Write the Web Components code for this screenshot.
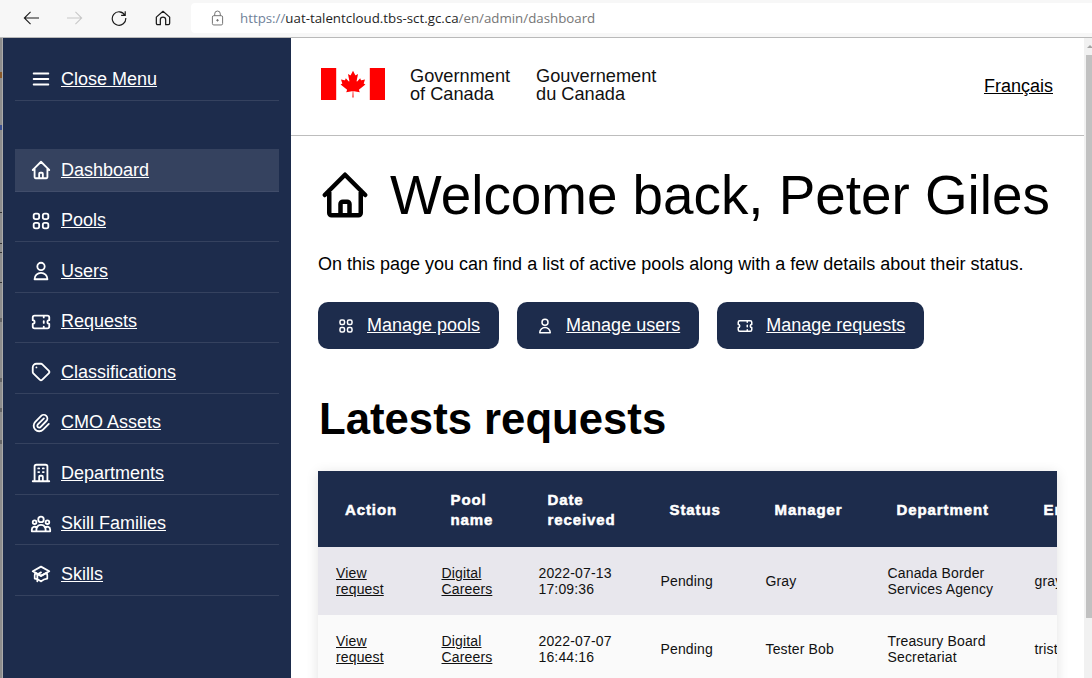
<!DOCTYPE html>
<html lang="en">
<head>
<meta charset="utf-8">
<title>Dashboard</title>
<style>
  html, body { margin: 0; height: 678px; overflow: hidden; }
  body { font-family: "Liberation Sans", Arial, sans-serif; background: #fff; }
</style>
</head>
<body>

<app-window>
  <browser-bar slot="bar" url-path="/en/admin/dashboard"></browser-bar>
  <admin-nav slot="nav">
    <nav-item icon="menu" class="top">Close Menu</nav-item>
    <nav-item icon="home" active>Dashboard</nav-item>
    <nav-item icon="pools">Pools</nav-item>
    <nav-item icon="user">Users</nav-item>
    <nav-item icon="ticket">Requests</nav-item>
    <nav-item icon="tag">Classifications</nav-item>
    <nav-item icon="clip">CMO Assets</nav-item>
    <nav-item icon="office">Departments</nav-item>
    <nav-item icon="group">Skill Families</nav-item>
    <nav-item icon="cap">Skills</nav-item>
  </admin-nav>
  <gc-header slot="header"></gc-header>
  <dash-page slot="main">
    <action-button icon="pools">Manage pools</action-button>
    <action-button icon="user">Manage users</action-button>
    <action-button icon="ticket">Manage requests</action-button>
  </dash-page>
</app-window>

<script>
const ICONS = {
  menu: '<path d="M4 6h16M4 12h16M4 18h16"/>',
  home: '<path d="M3 12l2-2m0 0l7-7 7 7M5 10v10a1 1 0 001 1h3m10-11l2 2m-2-2v10a1 1 0 01-1 1h-3m-6 0a1 1 0 001-1v-4a1 1 0 011-1h2a1 1 0 011 1v4a1 1 0 001 1m-6 0h6"/>',
  pools: '<path d="M4 6a2 2 0 012-2h2a2 2 0 012 2v2a2 2 0 01-2 2H6a2 2 0 01-2-2V6zM14 6a2 2 0 012-2h2a2 2 0 012 2v2a2 2 0 01-2 2h-2a2 2 0 01-2-2V6zM4 16a2 2 0 012-2h2a2 2 0 012 2v2a2 2 0 01-2 2H6a2 2 0 01-2-2v-2zM14 16a2 2 0 012-2h2a2 2 0 012 2v2a2 2 0 01-2 2h-2a2 2 0 01-2-2v-2z"/>',
  user: '<path d="M16 7a4 4 0 11-8 0 4 4 0 018 0zM12 14a7 7 0 00-7 7h14a7 7 0 00-7-7z"/>',
  ticket: '<path d="M15 5v2m0 4v2m0 4v2M5 5a2 2 0 00-2 2v3a2 2 0 110 4v3a2 2 0 002 2h14a2 2 0 002-2v-3a2 2 0 110-4V7a2 2 0 00-2-2H5z"/>',
  tag: '<path d="M7 7h.01M7 3h5c.512 0 1.024.195 1.414.586l7 7a2 2 0 010 2.828l-7 7a2 2 0 01-2.828 0l-7-7A1.994 1.994 0 013 12V7a4 4 0 014-4z"/>',
  clip: '<path d="M15.172 7l-6.586 6.586a2 2 0 102.828 2.828l6.414-6.586a4 4 0 00-5.656-5.656l-6.415 6.585a6 6 0 108.486 8.486L20.5 13"/>',
  office: '<path d="M19 21V5a2 2 0 00-2-2H7a2 2 0 00-2 2v16m14 0h2m-2 0h-5m-9 0H3m2 0h5M9 7h1m-1 4h1m4-4h1m-1 4h1m-5 10v-5a1 1 0 011-1h2a1 1 0 011 1v5m-4 0h4"/>',
  group: '<path d="M17 20h5v-2a3 3 0 00-5.356-1.857M17 20H7m10 0v-2c0-.656-.126-1.283-.356-1.857M7 20H2v-2a3 3 0 015.356-1.857M7 20v-2c0-.656.126-1.283.356-1.857m0 0a5.002 5.002 0 019.288 0M15 7a3 3 0 11-6 0 3 3 0 016 0zm6 3a2 2 0 11-4 0 2 2 0 014 0zM7 10a2 2 0 11-4 0 2 2 0 014 0z"/>',
  cap: '<path d="M12 14l9-5-9-5-9 5 9 5z"/><path d="M12 14l6.160-3.422a12.083 12.083 0 01.665 6.479A11.952 11.952 0 0012 20.055a11.952 11.952 0 00-6.824-2.998 12.078 12.078 0 01.665-6.479L12 14zm-4 6v-7.500l4-2.222"/>'
};

function iconSvg(name, size, weight) {
  return `<svg width="${size}" height="${size}" viewBox="0 0 24 24" fill="none" stroke="currentColor" stroke-width="${weight}" stroke-linecap="round" stroke-linejoin="round">${ICONS[name]}</svg>`;
}

class AppWindow extends HTMLElement {
  constructor() {
    super();
    this.attachShadow({ mode: 'open' });
    this.shadowRoot.innerHTML = `
      <style>
        :host { display: grid; grid-template-columns: 3px 288px 793px 8px; grid-template-rows: 38px 640px; width: 1092px; height: 678px; overflow: hidden; }
        .bar { grid-column: 1 / -1; }
        /* sliver of the window behind the browser */
        .edge {
          background:
            linear-gradient(#8a5a2a, #8a5a2a) 0 34px / 2px 6px no-repeat,
            linear-gradient(#3a4f8f, #3a4f8f) 0 87px / 2px 5px no-repeat,
            linear-gradient(#333, #333) 0 174px / 2px 1px no-repeat,
            linear-gradient(#333, #333) 0 205px / 2px 1px no-repeat,
            linear-gradient(#333, #333) 0 214px / 2px 1px no-repeat,
            linear-gradient(#333, #333) 0 244px / 2px 1px no-repeat,
            linear-gradient(#666, #666) 0 280px / 2px 4px no-repeat,
            linear-gradient(#666, #666) 0 340px / 2px 4px no-repeat,
            linear-gradient(#666, #666) 0 370px / 2px 4px no-repeat,
            linear-gradient(#666, #666) 0 402px / 2px 4px no-repeat,
            linear-gradient(90deg, #8d8d8d 0 2px, #ababab 2px);
        }
        .content { display: flex; flex-direction: column; overflow: hidden; min-width: 0; }
        .scroll { background: #f1f1f1; display: flex; flex-direction: column; align-items: stretch; padding-left: 2px; }
        .arrow { height: 17px; position: relative; }
        .arrow::after { content: ""; position: absolute; left: 1px; top: 7px; border-left: 3px solid transparent; border-right: 3px solid transparent; border-bottom: 3px solid #a3a3a3; }
        .thumb { height: 563px; background: #c1c1c1; }
      </style>
      <div class="bar"><slot name="bar"></slot></div>
      <div class="edge"></div>
      <slot name="nav"></slot>
      <div class="content"><slot name="header"></slot><slot name="main"></slot></div>
      <div class="scroll"><div class="arrow"></div><div class="thumb"></div></div>`;
  }
}

class BrowserBar extends HTMLElement {
  constructor() {
    super();
    this.attachShadow({ mode: 'open' });
  }
  connectedCallback() {
    this.shadowRoot.innerHTML = `
      <style>
        :host { display: flex; align-items: center; height: 38px; box-sizing: border-box; background: #f7f7f7; border-bottom: 1px solid #b9b9b9; padding: 0 0 1px 23px; color: #1a1a1a; }
        svg { display: block; flex: none; }
        .btns { display: flex; align-items: center; gap: 28px; width: 168px; flex: none; }
        .url { flex: 1; height: 30px; background: #fff; border-radius: 4px 0 0 4px; display: flex; align-items: center; padding-left: 20px; gap: 16px; font: 13.300px "Open Sans", sans-serif; color: #767676; }
        .url b { font-weight: 400; color: #1f1f1f; }
        .url i { font-style: normal; color: #6f8299; }
      </style>
      <div class="btns">
        <svg width="16" height="16" viewBox="0 0 18 18" fill="none" stroke="#1a1a1a" stroke-width="1.200"><path d="M18 9H1.500M8.500 2L1.500 9l7 7"/></svg>
        <svg width="16" height="16" viewBox="0 0 18 18" fill="none" stroke="#c8c8c8" stroke-width="1.200"><path d="M0 9h16.500M9.500 2l7 7-7 7"/></svg>
        <svg width="16" height="16" viewBox="0 0 18 18" fill="none" stroke="#1a1a1a" stroke-width="1.300"><path d="M15.600 5.800A7.600 7.600 0 1 0 16.600 9M16 1.500v4.600h-4.600"/></svg>
        <svg width="16" height="16" viewBox="0 0 18 18" fill="none" stroke="#1a1a1a" stroke-width="1.400" stroke-linejoin="round"><path d="M1.500 8L9 1.500 16.500 8v7a1.500 1.500 0 0 1-1.500 1.500h-3V11a3 3 0 0 0-6 0v5.500H3A1.500 1.500 0 0 1 1.500 15z"/></svg>
      </div>
      <div class="url">
        <svg width="13" height="16" viewBox="0 0 14 16" fill="none" stroke="#6a6a6a" stroke-width="1"><rect x="1.500" y="5.500" width="11" height="10" rx="1.500"/><path d="M4 5.500V3.500a3 3 0 0 1 6 0v2"/><circle cx="7" cy="10.500" r=".8" fill="#6a6a6a"/></svg>
        <span><i>https://</i><b>uat-talentcloud.tbs-sct.gc.ca</b>${this.getAttribute('url-path')}</span>
      </div>`;
  }
}

class AdminNav extends HTMLElement {
  constructor() {
    super();
    this.attachShadow({ mode: 'open' });
    this.shadowRoot.innerHTML = `
      <style>
        :host { display: flex; flex-direction: column; background: #1d2c4c; padding: 12px 12px 0 12px; box-sizing: border-box; height: 640px; overflow: hidden; }
        ::slotted(.top) { margin-bottom: 48px; }
      </style>
      <slot></slot>`;
  }
}

class NavItem extends HTMLElement {
  constructor() {
    super();
    this.attachShadow({ mode: 'open' });
  }
  connectedCallback() {
    this.shadowRoot.innerHTML = `
      <style>
        :host { display: flex; flex: none; align-items: center; gap: 9px; height: 50.500px; box-sizing: border-box; padding: 9px 0 0 15px; border-bottom: 1px solid #35425f; color: #fff; font-size: 18px; }
        :host([active]) { background: #35425f; height: 43px; padding-top: 0; border-bottom-color: #414d6a; margin-bottom: -.5px; }
        :host(.top) { height: 51px; padding-top: 8px; }
        svg { display: block; flex: none; }
        a { color: inherit; }
      </style>
      ${iconSvg(this.getAttribute('icon'), 22, 2)}
      <a href="#"><slot></slot></a>`;
  }
}

class GcHeader extends HTMLElement {
  constructor() {
    super();
    this.attachShadow({ mode: 'open' });
    this.shadowRoot.innerHTML = `
      <style>
        :host { display: flex; align-items: center; height: 98px; box-sizing: border-box; border-bottom: 1px solid #bdbdbd; padding: 0 31px 6px 30px; flex: none; }
        svg { display: block; flex: none; }
        .sig { display: flex; align-items: center; gap: 26px; margin: 3px 0 0 25px; font-size: 18.200px; line-height: 18px; color: #111; }
        .sig div { white-space: pre-line; }
        a { margin: 6px 0 0 auto; color: #000; font-size: 18px; }
      </style>
      <svg width="64" height="32" viewBox="0 0 9600 4800"><rect width="2280" height="4800" fill="#f00"/><rect x="7320" width="2280" height="4800" fill="#f00"/><path fill="#f00" d="M4890 4430l-45-863a95 95 0 0 1 111-98l859 151-116-320a65 65 0 0 1 20-73l941-762-212-99a65 65 0 0 1-34-79l186-572-542 115a65 65 0 0 1-73-38l-105-247-423 454a65 65 0 0 1-111-57l204-1052-327 189a65 65 0 0 1-91-27l-332-652-332 652a65 65 0 0 1-91 27l-327-189 204 1052a65 65 0 0 1-111 57l-423-454-105 247a65 65 0 0 1-73 38l-542-115 186 572a65 65 0 0 1-34 79l-212 99 941 762a65 65 0 0 1 20 73l-116 320 859-151a95 95 0 0 1 111 98l-45 863z"/></svg>
      <div class="sig"><div>Government
of Canada</div><div>Gouvernement
du Canada</div></div>
      <a href="#">Français</a>`;
  }
}

class ActionButton extends HTMLElement {
  constructor() {
    super();
    this.attachShadow({ mode: 'open' });
  }
  connectedCallback() {
    this.shadowRoot.innerHTML = `
      <style>
        :host { display: inline-flex; align-items: center; gap: 12px; height: 47px; box-sizing: border-box; padding: 0 19px 0 19px; background: #1d2c4c; border-radius: 10px; color: #fff; font-size: 18px; }
        svg { display: block; flex: none; }
        a { color: inherit; }
      </style>
      ${iconSvg(this.getAttribute('icon'), 18, 2)}
      <a href="#"><slot></slot></a>`;
  }
}

class RequestsTable extends HTMLElement {
  constructor() {
    super();
    this.attachShadow({ mode: 'open' });
    const rows = [
      ['2022-07-13<br>17:09:36', 'Gray', 'Canada Border<br>Services Agency', 'gray'],
      ['2022-07-07<br>16:44:16', 'Tester Bob', 'Treasury Board<br>Secretariat', 'trist']
    ];
    const body = rows.map(([date, mgr, dept, mail]) => `
      <tr>
        <td><a href="#">View<br>request</a></td>
        <td><a href="#">Digital<br>Careers</a></td>
        <td>${date}</td>
        <td>Pending</td>
        <td>${mgr}</td>
        <td>${dept}</td>
        <td>${mail}</td>
      </tr>`).join('');
    this.shadowRoot.innerHTML = `
      <style>
        :host { display: block; width: 739px; height: 240px; overflow: hidden; box-shadow: 0 2px 12px rgba(0,0,0,.12); }
        table { border-collapse: collapse; table-layout: fixed; width: 739px; font-size: 14px; line-height: 16px; color: #111; }
        th { background: #1d2c4c; color: #fff; height: 76px; padding: 2px 0 0 27px; text-align: left; font-weight: 700; font-size: 15px; line-height: 20px; letter-spacing: .9px; -webkit-text-stroke: .5px #fff; box-sizing: border-box; overflow: hidden; white-space: nowrap; }
        td { height: 68px; padding: 0 0 0 18px; box-sizing: border-box; overflow: hidden; white-space: nowrap; letter-spacing: .15px; }
        tr:nth-child(odd) td { background: #e8e7ed; }
        tr:nth-child(even) td { background: #fafafa; }
        a { color: inherit; }
      </style>
      <table>
        <colgroup><col style="width:105.500px"><col style="width:97px"><col style="width:122px"><col style="width:105px"><col style="width:122px"><col style="width:147px"><col style="width:40.500px"></colgroup>
        <thead><tr><th>Action</th><th>Pool<br>name</th><th>Date<br>received</th><th>Status</th><th>Manager</th><th>Department</th><th>Email</th></tr></thead>
        <tbody>${body}</tbody>
      </table>`;
  }
}

class DashPage extends HTMLElement {
  constructor() {
    super();
    this.attachShadow({ mode: 'open' });
    this.shadowRoot.innerHTML = `
      <style>
        :host { display: block; padding: 0 27px; color: #000; }
        .title { display: flex; align-items: center; gap: 18px; height: 114px; padding-top: 2px; margin: 0; font-size: 54.800px; font-weight: 400; line-height: 64px; white-space: nowrap; }
        svg { display: block; flex: none; }
        p { margin: 0; font-size: 18px; line-height: 24px; }
        .actions { display: flex; gap: 18px; margin-top: 26px; }
        h2 { margin: 42px 0 0 1px; font-size: 43.700px; line-height: 56px; font-weight: 700; }
        requests-table { margin-top: 24px; }
      </style>
      <h1 class="title">${iconSvg('home', 54, 2)}<span>Welcome back, Peter Giles</span></h1>
      <p>On this page you can find a list of active pools along with a few details about their status.</p>
      <div class="actions"><slot></slot></div>
      <h2>Latests requests</h2>
      <requests-table></requests-table>`;
  }
}

customElements.define('app-window', AppWindow);
customElements.define('browser-bar', BrowserBar);
customElements.define('admin-nav', AdminNav);
customElements.define('nav-item', NavItem);
customElements.define('gc-header', GcHeader);
customElements.define('action-button', ActionButton);
customElements.define('requests-table', RequestsTable);
customElements.define('dash-page', DashPage);
</script>
</body>
</html>
